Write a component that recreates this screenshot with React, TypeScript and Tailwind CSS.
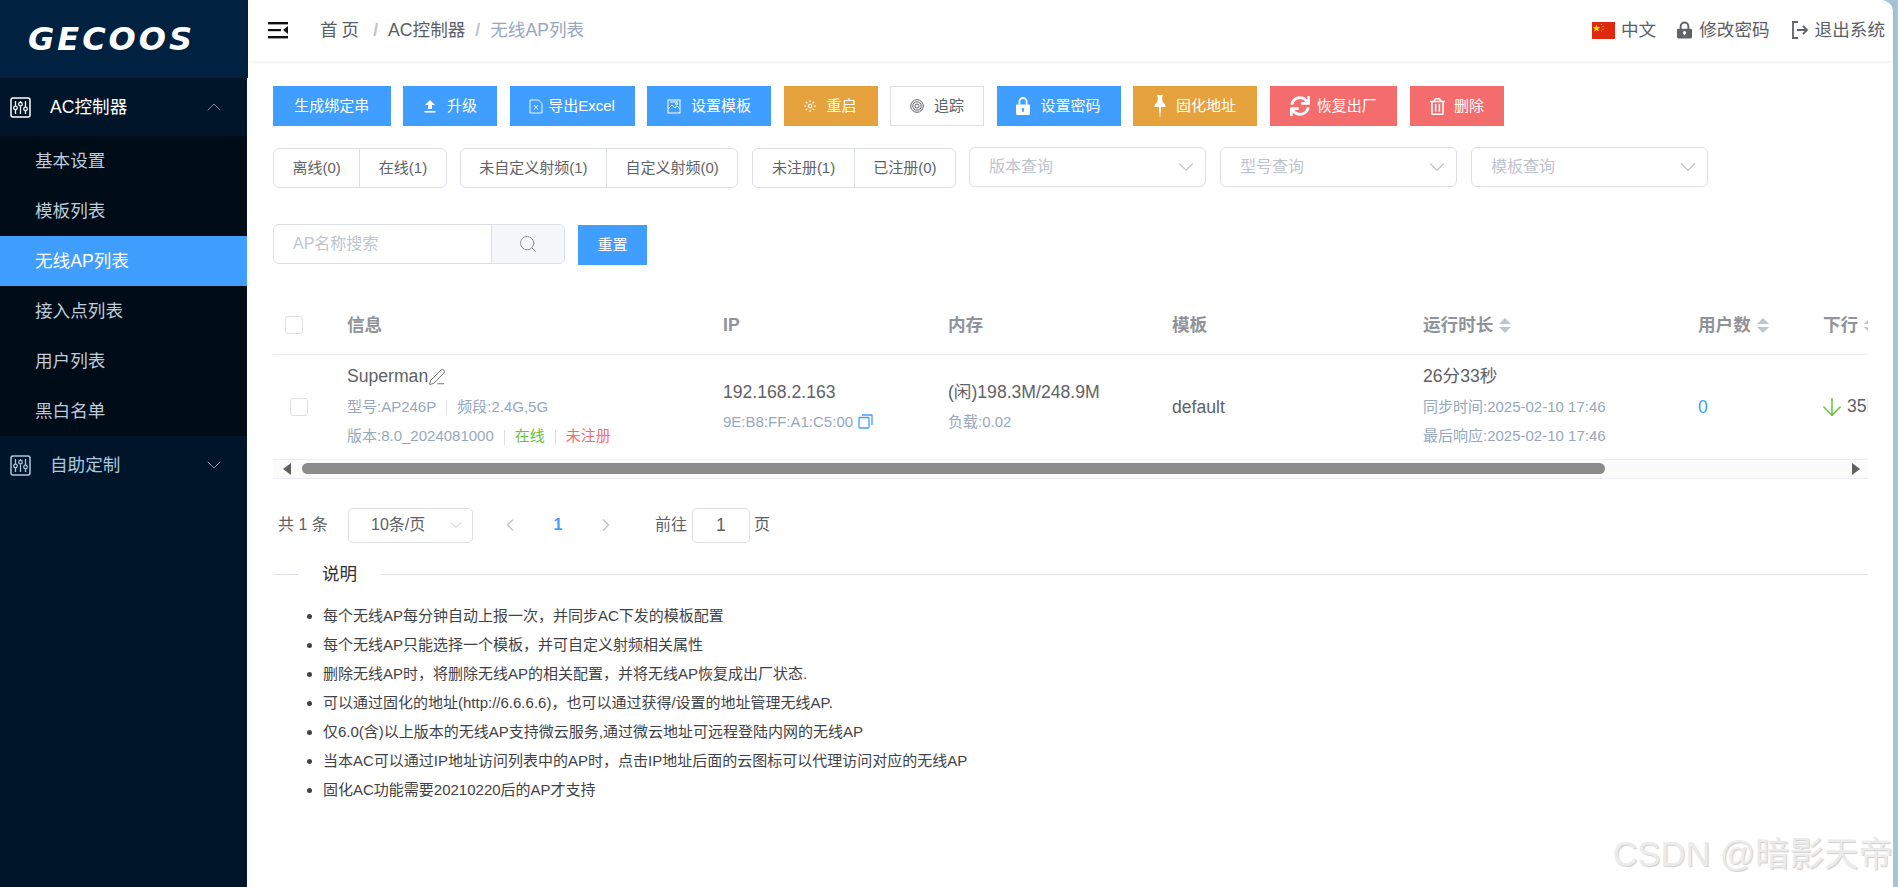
import { ChevronDown, ChevronLeft, ChevronRight, ChevronUp, PenLine, Search, ArrowDown } from "lucide-react";
import { FaSync, FaRegTrashAlt } from "react-icons/fa";
import type { ReactNode } from "react";

const SubMenu = ["基本设置", "模板列表", "无线AP列表", "接入点列表", "用户列表", "黑白名单"];

const Notes = [
    "每个无线AP每分钟自动上报一次，并同步AC下发的模板配置",
    "每个无线AP只能选择一个模板，并可自定义射频相关属性",
    "删除无线AP时，将删除无线AP的相关配置，并将无线AP恢复成出厂状态.",
    "可以通过固化的地址(http://6.6.6.6)，也可以通过获得/设置的地址管理无线AP.",
    "仅6.0(含)以上版本的无线AP支持微云服务,通过微云地址可远程登陆内网的无线AP",
    "当本AC可以通过IP地址访问列表中的AP时，点击IP地址后面的云图标可以代理访问对应的无线AP",
    "固化AC功能需要20210220后的AP才支持",
];

function SliderIcon() {
    return (
        <svg width="21" height="21" viewBox="0 0 21 21" fill="none" stroke="currentColor" strokeWidth="1.3">
            <rect x="1" y="1" width="19" height="19" rx="2" strokeWidth="1.5" />
            <path d="M5.5 4v5M5.5 13v4M10.5 4v1M10.5 9.5V17M15.5 4v6M15.5 14v3" />
            <circle cx="5.5" cy="11" r="1.8" />
            <circle cx="10.5" cy="7.2" r="1.8" />
            <circle cx="15.5" cy="12" r="1.8" />
        </svg>
    );
}

function Hamburger() {
    return (
        <svg width="20" height="17" viewBox="0 0 20 17" fill="#111">
            <rect x="0" y="0" width="20" height="2.4" />
            <rect x="0" y="7" width="13" height="2.2" />
            <rect x="0" y="14" width="20" height="2.4" />
            <path d="M20 4v8l-5-4z" />
        </svg>
    );
}

function Flag() {
    return (
        <svg width="23" height="17" viewBox="0 0 23 17">
            <rect width="23" height="17" fill="#de2910" />
            <path d="M4.5 2.5l1 2.6 2.7.1-2.1 1.7.7 2.6-2.3-1.5-2.3 1.5.7-2.6L.8 5.2l2.7-.1z" fill="#ffde00" />
            <circle cx="9.5" cy="2.5" r=".6" fill="#ffde00" />
            <circle cx="11" cy="4.5" r=".6" fill="#ffde00" />
            <circle cx="11" cy="7" r=".6" fill="#ffde00" />
            <circle cx="9.5" cy="9" r=".6" fill="#ffde00" />
        </svg>
    );
}

function LockFilled() {
    return (
        <svg width="15" height="18" viewBox="0 0 17 19" fill="#5f6368">
            <path d="M3 8V5.5a5.5 5.5 0 0 1 11 0V8h1.5a1.5 1.5 0 0 1 1.5 1.5v8a1.5 1.5 0 0 1-1.5 1.5h-14A1.5 1.5 0 0 1 0 17.5v-8A1.5 1.5 0 0 1 1.5 8zm2.2 0h6.6V5.5a3.3 3.3 0 0 0-6.6 0z" />
            <circle cx="8.5" cy="12.5" r="1.8" fill="#fff" />
            <rect x="7.8" y="12.5" width="1.4" height="3" fill="#fff" />
        </svg>
    );
}

function LogoutIcon() {
    return (
        <svg width="17" height="18" viewBox="0 0 17 18" fill="none" stroke="#5f6368" strokeWidth="1.8">
            <path d="M6 1H1v16h5" />
            <path d="M5 9h10M11 5l4 4-4 4" />
        </svg>
    );
}

function UploadIcon() {
    return (
        <svg width="14" height="14" viewBox="0 0 14 14" fill="#fff">
            <path d="M7 1l5 5H9v4H5V6H2z" />
            <rect x="1.5" y="12" width="11" height="1.6" />
        </svg>
    );
}

function ExcelIcon() {
    return (
        <svg width="14" height="15" viewBox="0 0 14 15" fill="none" stroke="#fff" strokeWidth="0.9">
            <path d="M1 1h8.5L13 4.5V14H1z" />
            <path d="M5 6l4 4.5M9 6l-4 4.5" strokeWidth="0.8" />
        </svg>
    );
}

function TemplateIcon() {
    return (
        <svg width="14" height="15" viewBox="0 0 14 15" fill="none" stroke="#fff" strokeWidth="1">
            <rect x="1" y="1" width="12" height="13" />
            <path d="M1 10l4-4 3 3 2-2 3 3M3 3h8" />
            <circle cx="9.5" cy="4.8" r="1" />
        </svg>
    );
}

function SunIcon() {
    return (
        <svg width="12" height="12" viewBox="0 0 12 12" fill="none" stroke="#fff" strokeWidth="1.1">
            <circle cx="6" cy="6" r="1.7" />
            <path d="M6 0v2.3M6 9.7V12M0 6h2.3M9.7 6H12M1.8 1.8l1.6 1.6M8.6 8.6l1.6 1.6M1.8 10.2l1.6-1.6M8.6 3.4l1.6-1.6" />
        </svg>
    );
}

function TargetIcon() {
    return (
        <svg width="14" height="14" viewBox="0 0 14 14" fill="none" stroke="#606266" strokeWidth="1">
            <circle cx="7" cy="7" r="6.3" />
            <circle cx="7" cy="7" r="4.2" />
            <circle cx="7" cy="7" r="2" />
        </svg>
    );
}

function OpenLockIcon() {
    return (
        <svg width="14" height="18" viewBox="0 0 14 18" fill="#fff">
            <path d="M2.5 7.5V4.6a4.5 4.5 0 0 1 9 0V7.5h-1.8V4.6a2.7 2.7 0 0 0-5.4 0v2.9z" />
            <path fillRule="evenodd" d="M1.2 7.5h11.6c.7 0 1.2.5 1.2 1.2v8.1c0 .7-.5 1.2-1.2 1.2H1.2C.5 18 0 17.500 0 16.800V8.700c0-.7.5-1.200 1.200-1.200zM7 11a1.300 1.300 0 0 0-.7 2.400V15h1.400v-1.600A1.300 1.300 0 0 0 7 11z" />
        </svg>
    );
}

function PinIcon() {
    return (
        <svg width="12" height="22" viewBox="0 0 12 22" fill="#fff">
            <path d="M3 0h6L8.300 2v4l3.200 4.500V12H7l-.7 10h-.6L5 12H.5v-1.500L3.700 6V2z" />
        </svg>
    );
}

function CopyIcon() {
    return (
        <svg width="15" height="15" viewBox="0 0 15 15" fill="none" stroke="#409eff" strokeWidth="1.3">
            <rect x="1" y="3.500" width="10" height="10.500" rx="1" />
            <path d="M4 1h9.500a.5.500 0 0 1 .5.500V11" />
        </svg>
    );
}

function SortCaret() {
    return (
        <span className="ml-[6px] inline-flex flex-col gap-[3px] align-middle">
            <span className="h-0 w-0 border-x-[6px] border-b-[6px] border-x-transparent border-b-[#c0c4cc]" />
            <span className="h-0 w-0 border-x-[6px] border-t-[6px] border-x-transparent border-t-[#c0c4cc]" />
        </span>
    );
}

function Divider() {
    return <span className="mx-[10px] inline-block h-[15px] w-px bg-[#dcdfe6] align-middle" />;
}

function Checkbox() {
    return <span className="block h-[18px] w-[18px] rounded-[3px] border border-[#dcdfe6] bg-white" />;
}

function ActionButton({ className, icon, label }: { className: string; icon?: ReactNode; label: string }) {
    return (
        <button className={`flex h-10 items-center justify-center text-[15px] ${className}`}>
            {icon}
            {label}
        </button>
    );
}

function RadioGroup({ items }: { items: string[] }) {
    return (
        <div className="mt-px flex h-10 rounded-[6px] border border-[#dcdfe6] text-[15px] text-[#606266]">
            {items.map((item, index) => (
                <span
                    key={item}
                    className={`flex items-center px-[18.500px] ${index > 0 ? "border-l border-[#dcdfe6]" : ""}`}
                >
                    {item}
                </span>
            ))}
        </div>
    );
}

function SelectBox({ label }: { label: string }) {
    return (
        <div className="flex h-10 w-[237px] items-center justify-between rounded-[6px] border border-[#dcdfe6] pl-[19px] pr-[6px] text-[16px] text-[#c0c4cc]">
            {label}
            <ChevronDown size={26} strokeWidth={1} />
        </div>
    );
}

export default function App() {
    return (
        <div className="relative flex h-[887px] w-[1898px] overflow-hidden bg-[#a5c4da] font-['Liberation_Sans','Noto_Sans_CJK_SC',sans-serif]">
            {/* Sidebar */}
            <aside className="flex h-full w-[248px] shrink-0 flex-col bg-white">
                <div className="flex h-[78px] items-center bg-[#002140] pl-[28px]">
                    <span className="font-['DejaVu_Sans',sans-serif] text-[32px] font-bold italic leading-none tracking-[3px] text-white">
                        GECOOS
                    </span>
                </div>
                <div className="flex w-[247px] flex-1 flex-col bg-[#001529]">
                    <div className="flex h-[58px] items-center pl-[10px] pr-[21px] text-[17.6px] text-white">
                        <SliderIcon />
                        <span className="ml-[19px] flex-1">AC控制器</span>
                        <ChevronUp size={24} strokeWidth={1} className="text-[#7d8c9e]" />
                    </div>
                    <div className="bg-[#000c17]">
                        {SubMenu.map((item) => (
                            <div
                                key={item}
                                className={`flex h-[50px] items-center pl-[35px] pt-px text-[17.6px] ${
                                    item === "无线AP列表" ? "bg-[#409eff] text-white" : "text-[#bfcbd9]"
                                }`}
                            >
                                {item}
                            </div>
                        ))}
                    </div>
                    <div className="flex h-[58px] items-center pl-[10px] pr-[21px] text-[17.6px] text-[#a9c8e0]">
                        <SliderIcon />
                        <span className="ml-[19px] flex-1">自助定制</span>
                        <ChevronDown size={24} strokeWidth={1} className="text-[#7d8c9e]" />
                    </div>
                </div>
            </aside>

            {/* Main */}
            <main className="mr-[5px] min-w-0 flex-1 rounded-tr-[12px] bg-white">
                <header className="flex h-[61px] items-center pl-5 pr-2 text-[17.6px] shadow-[0_1px_4px_rgba(0,21,41,0.08)]">
                    <Hamburger />
                    <nav className="ml-[32px] flex flex-1 items-center text-[#5a5e66]">
                        <span className="tracking-[4px]">首页</span>
                        <span className="mx-[10px] font-bold text-[#c0c4cc]">/</span>
                        <span>AC控制器</span>
                        <span className="mx-[10px] font-bold text-[#c0c4cc]">/</span>
                        <span className="text-[#97a8be]">无线AP列表</span>
                    </nav>
                    <div className="flex items-center text-[#5a5e66]">
                        <Flag />
                        <span className="ml-[6px]">中文</span>
                        <span className="ml-[21px]">
                            <LockFilled />
                        </span>
                        <span className="ml-[7px]">修改密码</span>
                        <span className="ml-[22px]">
                            <LogoutIcon />
                        </span>
                        <span className="ml-[6px]">退出系统</span>
                    </div>
                </header>

                <div className="px-[25px] pt-[25px]">
                    <div className="flex gap-[12.500px] text-white">
                        <ActionButton className="w-[117.500px] bg-[#409eff]" label="生成绑定串" />
                        <ActionButton className="w-[94px] gap-[10px] bg-[#409eff]" icon={<UploadIcon />} label="升级" />
                        <ActionButton className="w-[125px] gap-[5px] bg-[#409eff]" icon={<ExcelIcon />} label="导出Excel" />
                        <ActionButton className="w-[124px] gap-[10px] bg-[#409eff]" icon={<TemplateIcon />} label="设置模板" />
                        <ActionButton className="w-[94px] gap-[10px] bg-[#e6a23c]" icon={<SunIcon />} label="重启" />
                        <ActionButton
                            className="w-[94px] gap-[10px] border border-[#dcdfe6] bg-white text-[#606266]"
                            icon={<TargetIcon />}
                            label="追踪"
                        />
                        <ActionButton className="w-[124px] gap-[10px] bg-[#409eff]" icon={<OpenLockIcon />} label="设置密码" />
                        <ActionButton className="w-[124px] gap-[10px] bg-[#e6a23c]" icon={<PinIcon />} label="固化地址" />
                        <ActionButton className="w-[127.500px] gap-[7px] bg-[#f56c6c]" icon={<FaSync size={20} />} label="恢复出厂" />
                        <ActionButton className="w-[94px] gap-[8px] bg-[#f56c6c]" icon={<FaRegTrashAlt size={17} />} label="删除" />
                    </div>

                    <div className="mt-[21px] flex items-start">
                        <RadioGroup items={["离线(0)", "在线(1)"]} />
                        <div className="ml-[13px]">
                            <RadioGroup items={["未自定义射频(1)", "自定义射频(0)"]} />
                        </div>
                        <div className="ml-[14px]">
                            <RadioGroup items={["未注册(1)", "已注册(0)"]} />
                        </div>
                        <div className="ml-[13px] flex gap-[14px]">
                            <SelectBox label="版本查询" />
                            <SelectBox label="型号查询" />
                            <SelectBox label="模板查询" />
                        </div>
                    </div>

                    <div className="mt-[36px] flex items-start">
                        <div className="flex h-10 w-[292px] rounded-[6px] border border-[#dcdfe6] text-[16px]">
                            <input
                                placeholder="AP名称搜索"
                                className="w-[217px] pl-[19px] outline-none placeholder:text-[#c0c4cc]"
                            />
                            <span className="flex flex-1 items-center justify-center rounded-r-[6px] border-l border-[#dcdfe6] bg-[#f5f7fa] text-[#909399]">
                                <Search size={20} strokeWidth={1.2} />
                            </span>
                        </div>
                        <button className="ml-[13px] mt-px h-10 w-[69px] bg-[#409eff] text-[15px] text-white">重置</button>
                    </div>

                    {/* Table */}
                    <div className="mt-[31px] overflow-hidden">
                        <table className="w-[1900px] table-fixed border-collapse text-left text-[17.6px] text-[#606266]">
                            <colgroup>
                                <col className="w-[74px]" />
                                <col className="w-[376px]" />
                                <col className="w-[225px]" />
                                <col className="w-[224px]" />
                                <col className="w-[251px]" />
                                <col className="w-[275px]" />
                                <col className="w-[125px]" />
                                <col className="w-[350px]" />
                            </colgroup>
                            <thead>
                                <tr className="h-[58px] border-b border-[#ebeef5] text-[#909399]">
                                    <th className="pl-3 font-bold">
                                        <Checkbox />
                                    </th>
                                    <th className="font-bold">信息</th>
                                    <th className="font-bold">IP</th>
                                    <th className="font-bold">内存</th>
                                    <th className="font-bold">模板</th>
                                    <th className="font-bold">
                                        运行时长
                                        <SortCaret />
                                    </th>
                                    <th className="font-bold">
                                        用户数
                                        <SortCaret />
                                    </th>
                                    <th className="font-bold">
                                        下行
                                        <SortCaret />
                                    </th>
                                </tr>
                            </thead>
                            <tbody>
                                <tr className="h-[105px] border-b border-[#ebeef5]">
                                    <td className="pl-[17px]">
                                        <Checkbox />
                                    </td>
                                    <td className="leading-[29.500px]">
                                        <div className="flex items-center">
                                            Superman
                                            <PenLine size={18} strokeWidth={1.2} />
                                        </div>
                                        <div className="text-[15px] text-[#97a8be]">
                                            型号:AP246P
                                            <Divider />
                                            频段:2.4G,5G
                                        </div>
                                        <div className="text-[15px] text-[#97a8be]">
                                            版本:8.0_2024081000
                                            <Divider />
                                            <span className="text-[#67c23a]">在线</span>
                                            <Divider />
                                            <span className="text-[#f56c6c]">未注册</span>
                                        </div>
                                    </td>
                                    <td className="leading-[29px]">
                                        <div>192.168.2.163</div>
                                        <div className="flex items-center gap-[5px] text-[15px] text-[#97a8be]">
                                            9E:B8:FF:A1:C5:00
                                            <CopyIcon />
                                        </div>
                                    </td>
                                    <td className="leading-[29px]">
                                        <div>(闲)198.3M/248.9M</div>
                                        <div className="text-[15px] text-[#97a8be]">负载:0.02</div>
                                    </td>
                                    <td className="pt-px">default</td>
                                    <td className="leading-[29.500px]">
                                        <div>26分33秒</div>
                                        <div className="text-[15px] text-[#97a8be]">同步时间:2025-02-10 17:46</div>
                                        <div className="text-[15px] text-[#97a8be]">最后响应:2025-02-10 17:46</div>
                                    </td>
                                    <td className="pt-px text-[#409eff]">0</td>
                                    <td className="whitespace-nowrap">
                                        <div className="flex items-center gap-px">
                                            <ArrowDown size={28} strokeWidth={1.3} className="-ml-[5px] text-[#67c23a]" />
                                            35KB/s
                                        </div>
                                    </td>
                                </tr>
                            </tbody>
                        </table>
                        {/* Scrollbar */}
                        <div className="flex h-[19px] items-center border-b border-[#ebeef5] bg-[#fbfbfb] pl-[10px] pr-[8px]">
                            <span className="h-0 w-0 border-y-[6px] border-r-[8px] border-y-transparent border-r-[#606060]" />
                            <span className="ml-[11px] h-[11px] w-[1303px] rounded-full bg-[#8c8c8c]" />
                            <span className="ml-auto h-0 w-0 border-y-[6px] border-l-[8px] border-y-transparent border-l-[#606060]" />
                        </div>
                    </div>

                    {/* Pagination */}
                    <div className="ml-[5px] mt-[29px] flex h-[35px] items-center text-[16px] text-[#606266]">
                        <span className="w-[50px] whitespace-nowrap">共 1 条</span>
                        <div className="ml-5 flex h-[35px] w-[125px] items-center justify-between rounded-[5px] border border-[#dcdfe6] pl-[22px] pr-[6px]">
                            10条/页
                            <ChevronDown size={20} strokeWidth={1.1} className="text-[#c0c4cc]" />
                        </div>
                        <span className="ml-[19px] flex w-9 justify-center text-[#c0c4cc]">
                            <ChevronLeft size={20} strokeWidth={1.8} />
                        </span>
                        <span className="ml-3 w-9 text-center font-bold text-[#409eff]">1</span>
                        <span className="ml-3 flex w-9 justify-center text-[#c0c4cc]">
                            <ChevronRight size={20} strokeWidth={1.8} />
                        </span>
                        <span className="ml-[31px]">前往</span>
                        <span className="ml-[5px] flex h-[35px] w-[58px] items-center justify-center rounded-[5px] border border-[#dcdfe6] text-[17.6px]">
                            1
                        </span>
                        <span className="ml-[4px]">页</span>
                    </div>

                    {/* Notes */}
                    <div className="mt-5 flex h-6 items-center text-[17.6px] text-[#303133]">
                        <span className="h-px w-[25px] bg-[#dcdfe6]" />
                        <span className="px-[24px]">说明</span>
                        <span className="h-px flex-1 bg-[#dcdfe6]" />
                    </div>
                    <ul className="ml-[50px] mt-[14px] list-disc text-[15px] leading-[29px] text-[#3f4246]">
                        {Notes.map((note) => (
                            <li key={note}>{note}</li>
                        ))}
                    </ul>
                </div>
            </main>

            {/* Watermark */}
            <div className="absolute bottom-[12px] right-[5px] whitespace-nowrap text-[34.500px] leading-[42px] text-[#ebebeb] [text-shadow:1px_1px_1px_#cfcfcf]">
                CSDN @暗影天帝
            </div>
        </div>
    );
}
